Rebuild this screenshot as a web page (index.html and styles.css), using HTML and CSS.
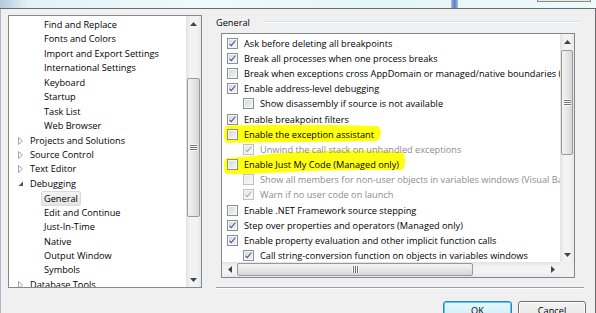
FILE: index.html
```html
<!DOCTYPE html>
<html lang="en">
<head>
    <meta charset="UTF-8">
    <title>Options</title>
    <link rel="stylesheet" href="styles.css">
</head>
<body>
    <div class="titlebar">
        <span class="glow"></span>
        <span class="tab"></span>
    </div>
    <div class="dialog">
        <div class="tree">
            <ul class="nodes">
                <li class="child">Find and Replace</li>
                <li class="child">Fonts and Colors</li>
                <li class="child">Import and Export Settings</li>
                <li class="child">International Settings</li>
                <li class="child">Keyboard</li>
                <li class="child">Startup</li>
                <li class="child">Task List</li>
                <li class="child">Web Browser</li>
                <li class="parent"><svg class="tw" width="6" height="8"><path d="M0.5 0.5 L4.5 4 L0.5 7.5Z" fill="#fff" stroke="#a6a6a6"/></svg>Projects and Solutions</li>
                <li class="parent"><svg class="tw" width="6" height="8"><path d="M0.5 0.5 L4.5 4 L0.5 7.5Z" fill="#fff" stroke="#a6a6a6"/></svg>Source Control</li>
                <li class="parent"><svg class="tw" width="6" height="8"><path d="M0.5 0.5 L4.5 4 L0.5 7.5Z" fill="#fff" stroke="#a6a6a6"/></svg>Text Editor</li>
                <li class="parent"><svg class="tw" width="6" height="8"><path d="M5 1.5 V6 H0.5Z" fill="#555"/></svg>Debugging</li>
                <li class="child"><span class="selected">General</span></li>
                <li class="child">Edit and Continue</li>
                <li class="child">Just-In-Time</li>
                <li class="child">Native</li>
                <li class="child">Output Window</li>
                <li class="child">Symbols</li>
                <li class="parent"><svg class="tw" width="6" height="8"><path d="M0.5 0.5 L4.5 4 L0.5 7.5Z" fill="#fff" stroke="#a6a6a6"/></svg>Database Tools</li>
            </ul>
            <div class="vscroll tree-scroll">
                <span class="arrow"><svg width="7" height="4"><path d="M0 4 L3.5 0 L7 4Z" fill="#444"/></svg></span>
                <span class="track"><span class="thumb"><span class="grip"></span></span></span>
                <span class="arrow"><svg width="7" height="4"><path d="M0 0 L3.5 4 L7 0Z" fill="#444"/></svg></span>
            </div>
        </div>

        <div class="pane">
            <div class="group-title"><span>General</span><i></i></div>
            <div class="options">
                <div class="list-area">
                    <ul class="checks">
                        <li><span class="cb on"></span>Ask before deleting all breakpoints</li>
                        <li><span class="cb on"></span>Break all processes when one process breaks</li>
                        <li><span class="cb"></span>Break when exceptions cross AppDomain or managed/native boundaries (Managed only)</li>
                        <li><span class="cb on"></span>Enable address-level debugging</li>
                        <li class="sub"><span class="cb"></span>Show disassembly if source is not available</li>
                        <li><span class="cb on"></span>Enable breakpoint filters</li>
                        <li><span class="cb"></span>Enable the exception assistant</li>
                        <li class="sub off"><span class="cb on"></span>Unwind the call stack on unhandled exceptions</li>
                        <li><span class="cb"></span>Enable Just My Code (Managed only)</li>
                        <li class="sub off"><span class="cb"></span>Show all members for non-user objects in variables windows (Visual Basic only)</li>
                        <li class="sub off"><span class="cb on"></span>Warn if no user code on launch</li>
                        <li><span class="cb"></span>Enable .NET Framework source stepping</li>
                        <li><span class="cb on"></span>Step over properties and operators (Managed only)</li>
                        <li><span class="cb on"></span>Enable property evaluation and other implicit function calls</li>
                        <li class="sub"><span class="cb on"></span>Call string-conversion function on objects in variables windows</li>
                    </ul>
                    <div class="vscroll list-scroll">
                        <span class="arrow"><svg width="7" height="4"><path d="M0 4 L3.5 0 L7 4Z" fill="#444"/></svg></span>
                        <span class="track"><span class="thumb"><span class="grip"></span></span></span>
                        <span class="arrow"><svg width="7" height="4"><path d="M0 0 L3.5 4 L7 0Z" fill="#444"/></svg></span>
                    </div>
                </div>
                <div class="hscroll">
                    <span class="arrow"><svg width="4" height="7"><path d="M4 0 L0 3.5 L4 7Z" fill="#444"/></svg></span>
                    <span class="track"><span class="thumb"><span class="grip"></span></span></span>
                    <span class="arrow"><svg width="4" height="7"><path d="M0 0 L4 3.5 L0 7Z" fill="#444"/></svg></span>
                    <span class="corner"></span>
                </div>
                <!-- highlighter marks drawn over the list -->
                <svg class="marker" width="352" height="243">
                    <path d="M4 92 C40 90 110 91 156 92 C160 95 160 104 155 107 C110 108 50 108 4 109 C1 104 1 96 4 92Z" fill="#ffff10"/>
                    <path d="M4 124 C30 122 50 120 70 118 C110 116 150 116 181 118 C184 124 184 133 180 136 C140 136 100 136 70 138 C45 139 25 140 4 140 C1 135 1 128 4 124Z" fill="#ffff10"/>
                </svg>
            </div>
            <div class="sep"></div>
            <div class="buttons">
                <button class="default">OK</button>
                <button>Cancel</button>
            </div>
        </div>
    </div>
</body>
</html>
```

FILE: styles.css
```css
* {
    box-sizing: border-box;
}
body {
    margin: 0;
    width: 596px;
    height: 313px;
    overflow: hidden;
    background: #f0f0f0;
    font-family: 'Open Sans', sans-serif;
    font-size: 9.2px;
    color: #000;
}
ul {
    list-style: none;
    margin: 0;
    padding: 0;
}
.titlebar {
    position: relative;
    height: 9px;
    background: linear-gradient(to right, #b6c9dc, #e2f3f6 28px, #eefafb 200px, #e4f6f7 380px, #eef9fa 596px);
    border-bottom: 1px solid #6a6a6a;
}
.glow {
    position: absolute;
    left: 451px;
    top: 0;
    width: 7px;
    height: 8px;
    background: linear-gradient(to right, #a9bfe0, #5d7fc0, #a9bfe0);
}
.tab {
    position: absolute;
    left: 537px;
    top: -6px;
    width: 54px;
    height: 8px;
    border: 1px solid #8a8a8a;
    background: #e9e9e9;
}
.dialog {
    display: flex;
    height: 304px;
    padding: 6px 0 0 7px;
    border-left: 1px solid #a9b7c6;
    border-right: 1px solid #6a6a6a;
}

/* tree */
.tree {
    display: flex;
    width: 194px;
    height: 273px;
    border: 1px solid #828790;
    background: #fff;
}
.nodes {
    flex: 1;
    padding-top: 2px;
    overflow: hidden;
}
.nodes li {
    height: 14.45px;
    line-height: 14.45px;
    white-space: nowrap;
}
.nodes .child {
    padding-left: 35px;
}
.nodes .parent {
    padding-left: 9px;
}
.tw {
    margin-right: 6px;
    vertical-align: -1px;
}
.selected {
    display: inline-block;
    margin-left: -3px;
    padding: 0 2px;
    line-height: 13px;
    border: 1px solid #dadada;
    border-radius: 2px;
    background: linear-gradient(#f2f2f2, #e4e4e4);
}

/* scrollbars */
.vscroll {
    display: flex;
    flex-direction: column;
    background: linear-gradient(to right, #e3e3e3, #f3f3f3 30%, #f3f3f3 70%, #e8e8e8);
}
.tree-scroll {
    width: 15px;
}
.list-scroll {
    width: 14px;
}
.vscroll .arrow {
    height: 15px;
    display: flex;
    align-items: center;
    justify-content: center;
}
.vscroll .track {
    flex: 1;
    display: flex;
    flex-direction: column;
    padding: 0 1px;
}
.thumb {
    display: flex;
    align-items: center;
    justify-content: center;
    border: 1px solid #999;
    border-radius: 2px;
}
.vscroll .thumb {
    background: linear-gradient(to right, #f4f4f4, #e6e6e6 50%, #d6d6d6);
}
.tree-scroll .thumb {
    margin-top: 47px;
    height: 139px;
}
.list-scroll .thumb {
    margin-top: 1px;
    height: 105px;
}
.vscroll .grip {
    width: 7px;
    height: 7px;
    background: repeating-linear-gradient(#fcfcfc 0 1px, #707070 1px 2px);
}
.hscroll {
    display: flex;
    height: 15px;
    background: linear-gradient(#e3e3e3, #f3f3f3 30%, #f3f3f3 70%, #e8e8e8);
}
.hscroll .arrow {
    width: 15px;
    display: flex;
    align-items: center;
    justify-content: center;
}
.hscroll .track {
    flex: 1;
    display: flex;
    padding: 1px 0;
}
.hscroll .thumb {
    width: 236px;
    background: linear-gradient(#f4f4f4, #e6e6e6 50%, #d6d6d6);
}
.hscroll .grip {
    width: 7px;
    height: 7px;
    background: repeating-linear-gradient(to right, #fcfcfc 0 1px, #707070 1px 2px);
}
.hscroll .corner {
    width: 14px;
    background: #f0f0f0;
}

/* right pane */
.pane {
    width: 370px;
    margin-left: 14px;
}
.group-title {
    display: flex;
    align-items: center;
    height: 14px;
}
.group-title i {
    width: 317px;
    margin-left: 13px;
    border-top: 1px solid #d5dfe5;
    border-bottom: 1px solid #fff;
}
.options {
    position: relative;
    width: 354px;
    height: 245px;
    margin: 4px 0 0 5px;
    border: 1px solid #828790;
    background: #fff;
}
.list-area {
    display: flex;
    height: 228px;
}
.checks {
    flex: 1;
    padding: 1.5px 0 0 5px;
    overflow: hidden;
}
.checks li {
    display: flex;
    align-items: center;
    height: 15.2px;
    white-space: nowrap;
    position: relative;
    z-index: 2;
}
.checks li.sub {
    padding-left: 16px;
}
.checks li.off {
    color: #8d8d8d;
}
.cb {
    flex: none;
    position: relative;
    width: 11px;
    height: 11px;
    margin-right: 6px;
    border: 1px solid #8e8f8f;
    background: linear-gradient(135deg, #d2d5da, #f8f8f8);
    box-shadow: inset 0 0 0 1px #f6f6f6;
}
.cb.on::after {
    content: "";
    position: absolute;
    left: 3px;
    top: 0;
    width: 2px;
    height: 6px;
    border: solid #3a4f98;
    border-width: 0 1.6px 1.6px 0;
    transform: rotate(40deg);
}
.off .cb {
    border-color: #c0c0c0;
    background: linear-gradient(135deg, #e6e6e6, #fafafa);
}
.off .cb.on::after {
    border-color: #a8a8a8;
}
.marker {
    position: absolute;
    left: 0;
    top: 0;
    z-index: 1;
}
.sep {
    width: 368px;
    margin-top: 9px;
    border-top: 1px solid #a0a0a0;
    border-bottom: 1px solid #fff;
}
.buttons {
    display: flex;
    gap: 6px;
    margin: 12px 0 0 227px;
}
button {
    width: 68px;
    height: 23px;
    padding: 0 0 4px;
    font: inherit;
    color: #000;
    border: 1px solid #707070;
    border-radius: 3px;
    background: linear-gradient(#f2f2f2, #ebebeb 50%, #dddddd 50%, #cfcfcf);
    box-shadow: inset 0 0 0 1px #fcfcfc;
}
button.default {
    width: 69px;
    border-color: #3c7fb1;
    background: linear-gradient(#eaf6fd, #d9f0fc 50%, #bee6fd 50%, #a7d9f5);
    box-shadow: inset 0 0 0 1px #48d0f8;
}
```
